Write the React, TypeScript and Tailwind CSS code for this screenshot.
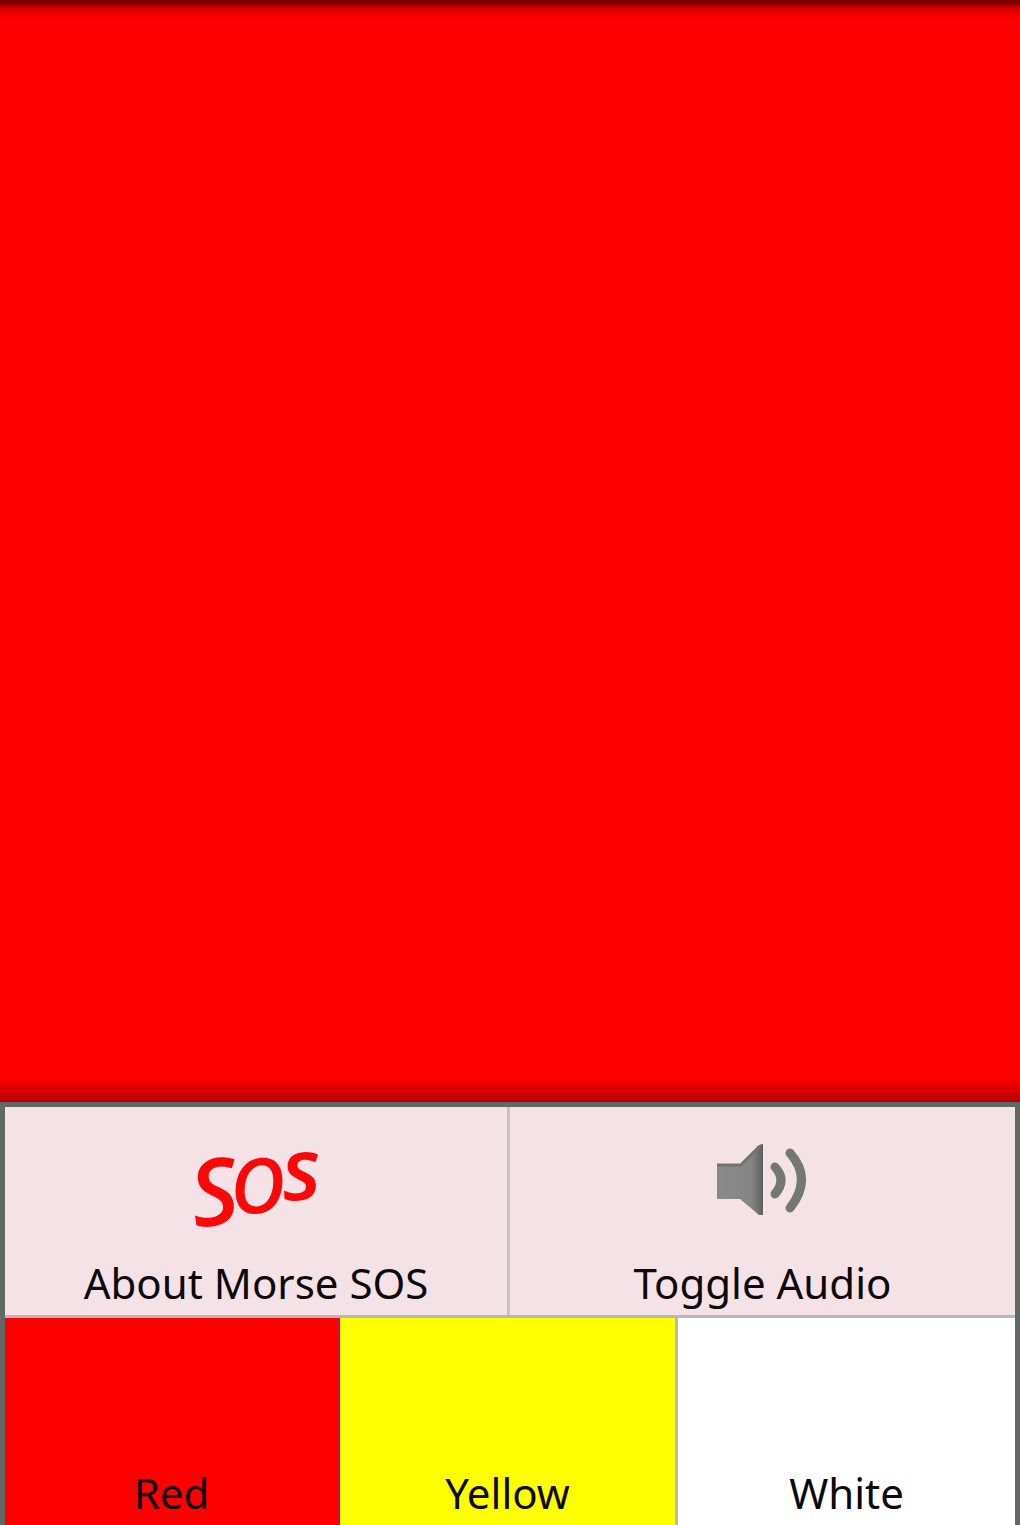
import { useState } from "react"

const SosLogo = () => (
  <svg viewBox="0 0 130 84" className="h-[84px] w-[130px] overflow-visible" aria-hidden="true">
    <g fill="#fa0808" fontFamily="'Open Sans', 'Noto Sans', sans-serif" fontStyle="italic" fontWeight="600">
      <text x="4" y="81" fontSize="92" transform="rotate(-8 4 81)">S</text>
      <text x="41" y="68" fontSize="76" transform="rotate(-4 41 68)">O</text>
      <text x="93" y="54" fontSize="86" transform="rotate(-4 93 54)">s</text>
    </g>
  </svg>
)

const SpeakerIcon = () => (
  <svg viewBox="0 0 96 92" className="h-[92px] w-24" aria-hidden="true">
    <defs>
      <linearGradient id="speaker" x1="0" y1="0" x2="1" y2="0">
        <stop offset="0" stopColor="#8a8a8a" />
        <stop offset="0.75" stopColor="#858585" />
        <stop offset="1" stopColor="#5c605e" />
      </linearGradient>
    </defs>
    <path d="M2 25h23l18-18q2-2 5-2v71h-4L25 60H2z" fill="url(#speaker)" />
    <path d="M2 26h24l19-19" fill="none" stroke="#707472" strokeWidth="3" />
    <path d="M60 28q12 13 0 27" fill="none" stroke="#737876" strokeWidth="9" strokeLinecap="round" />
    <path d="M75 14q23 26 0 55" fill="none" stroke="#737876" strokeWidth="9" strokeLinecap="round" />
  </svg>
)

const colors = [
  { name: "Red", value: "#ff0000", className: "bg-[#ff0000] border-r-2 border-[#d8005c]" },
  { name: "Yellow", value: "#ffff00", className: "bg-[#ffff00] border-r-3 border-[#b9b9b0]" },
  { name: "White", value: "#ffffff", className: "bg-white" },
]

const App = () => {
  const [color, setColor] = useState("#ff0000")
  const [audio, setAudio] = useState(true)

  return (
    <div className="flex min-h-screen flex-col font-['Noto_Sans','Open_Sans',sans-serif] text-[42px] leading-[48px] text-[#0c0a0b]">
      <main className="flex flex-1 flex-col justify-between" style={{ backgroundColor: color }}>
        <div className="h-5 bg-linear-to-b from-black/50 from-15% via-black/15 via-40% to-transparent" />
        <div className="h-6 bg-linear-to-b from-transparent to-black/30" />
      </main>

      <nav className="border-x-5 border-t-5 border-[#5f6966]">
        <div className="grid grid-cols-2 border-b-3 border-[#bfb3ba] bg-[#f5e2e6]">
          <button type="button" className="flex h-[208px] flex-col items-center justify-end gap-7 border-r-3 border-[#c8c1c3] pb-2">
            <SosLogo />
            <span>About Morse SOS</span>
          </button>
          <button
            type="button"
            aria-pressed={audio}
            onClick={() => setAudio(!audio)}
            className="flex h-[208px] flex-col items-center justify-end gap-7 pb-2"
          >
            <SpeakerIcon />
            <span>Toggle Audio</span>
          </button>
        </div>
        <div className="grid grid-cols-[335fr_338fr_337fr]">
          {colors.map((c) => (
            <button
              key={c.name}
              type="button"
              onClick={() => setColor(c.value)}
              className={`flex h-[207px] items-end justify-center pb-2 ${c.className}`}
            >
              {c.name}
            </button>
          ))}
        </div>
      </nav>
    </div>
  )
}

export default App
